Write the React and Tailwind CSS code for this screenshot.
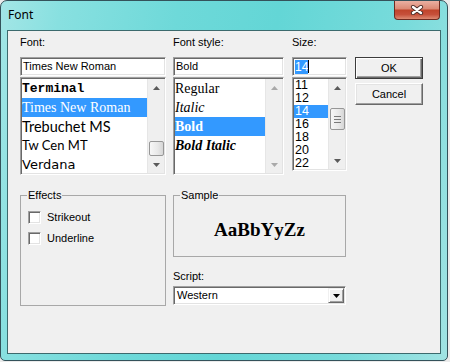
import React from 'react'

const sunken =
  'border border-t-[#a0a0a0] border-l-[#a0a0a0] border-r-white border-b-white shadow-[inset_1px_1px_0_#696969,inset_-1px_-1px_0_#e3e3e3]'

const Arrow = ({ up, color = '#5a5a5a' }) => (
  <svg width="7" height="4" viewBox="0 0 7 4">
    <path d={up ? 'M0 4 L3.5 0 L7 4Z' : 'M0 0 L3.5 4 L7 0Z'} fill={color} />
  </svg>
)

const ScrollBar = ({ children, disabled }) => {
  const c = disabled ? '#a9a9a9' : '#5a5a5a'
  return (
    <div className="w-[17px] h-full shrink-0 flex flex-col bg-[#efefef] border-l border-[#e6e6e6]">
      <div className="h-[17px] flex items-center justify-center">
        <Arrow up color={c} />
      </div>
      <div className="flex-1 flex flex-col items-center">{children}</div>
      <div className="h-[17px] flex items-center justify-center">
        <Arrow color={c} />
      </div>
    </div>
  )
}

const Label = ({ children }) => <div className="h-[13px] leading-[13px]">{children}</div>

const Checkbox = ({ label }) => (
  <div className="h-[13px] flex items-center">
    <div className={`w-[13px] h-[13px] bg-white ${sunken}`} />
    <span className="ml-[6px] leading-[13px]">{label}</span>
  </div>
)

const fonts = [
  { name: 'Terminal', cls: "font-['Liberation_Mono',monospace] font-bold text-[13px]" },
  { name: 'Times New Roman', cls: "font-['Liberation_Serif',serif] text-[14px]", selected: true },
  { name: 'Trebuchet MS', cls: "font-['Lato',sans-serif] text-[14.5px]" },
  { name: 'Tw Cen MT', cls: "font-['Lato',sans-serif] text-[13px]" },
  { name: 'Verdana', cls: "font-['DejaVu_Sans',sans-serif] text-[13px]" },
]

const styles = [
  { name: 'Regular', cls: '' },
  { name: 'Italic', cls: 'italic' },
  { name: 'Bold', cls: 'font-bold', selected: true },
  { name: 'Bold Italic', cls: 'font-bold italic' },
]

const sizes = ['11', '12', '14', '16', '18', '20', '22']

const App = () => {
  return (
    <div className="w-[450px] h-[362px] bg-[#ebebeb] overflow-hidden font-['Liberation_Sans',Arial,sans-serif] text-[11px] text-black">
      <div className="w-[448px] h-[361px] flex flex-col rounded-t-[7px] rounded-b-[5px] border border-[#34525a] bg-[linear-gradient(100deg,#a3e6e6_0%,#88e0e0_12%,#6ed9d9_35%,#63d6d6_55%,#78dbdb_80%,#a0e3e3_100%)]">
        {/* Title bar */}
        <div className="h-[29px] shrink-0 flex items-start justify-between">
          <span className="pl-[7px] pt-[6px] font-['Noto_Sans',sans-serif] text-[12px] leading-[16px]">Font</span>
          <div className="mr-[7px] w-[46px] h-[19px] rounded-b-[4px] border border-t-0 border-[#6d2b20] bg-[linear-gradient(180deg,#eab0a2_0%,#dc8b76_42%,#c0452c_52%,#c6503a_75%,#dd8a72_100%)] flex items-center justify-center">
            <svg width="14" height="10" viewBox="0 0 14 10">
              <path d="M3 2 L11 8 M11 2 L3 8" stroke="#4b2c27" strokeWidth="4.2" strokeLinecap="round" />
              <path d="M3 2 L11 8 M11 2 L3 8" stroke="#ffffff" strokeWidth="2.4" strokeLinecap="round" />
            </svg>
          </div>
        </div>

        {/* Client area */}
        <div className="mx-[6px] mb-[6px] flex-1 border border-[#3c6a6d] bg-[#f0f0f0] pl-[12px] pt-[5px]">
          <div className="flex items-start">
            {/* Font */}
            <div className="w-[146px]">
              <Label>Font:</Label>
              <div className={`mt-[8px] h-[19px] bg-white px-[2px] flex items-center ${sunken}`}>Times New Roman</div>
              <div className={`mt-[1px] h-[98px] bg-white p-[1px] flex overflow-hidden ${sunken}`}>
                <div className="flex-1 overflow-hidden">
                  {fonts.map((f) => (
                    <div
                      key={f.name}
                      className={`h-[19px] flex items-center whitespace-nowrap ${f.cls} ${f.selected ? 'bg-[#3399ff] text-white' : ''}`}
                    >
                      {f.name}
                    </div>
                  ))}
                </div>
                <ScrollBar>
                  <div className="mt-[45px] w-[15px] h-[15px] rounded-[2px] border border-[#979797] bg-[linear-gradient(90deg,#f7f7f7,#e8e8e8_60%,#d6d6d6)]" />
                </ScrollBar>
              </div>
            </div>

            {/* Font style */}
            <div className="ml-[7px] w-[111px]">
              <Label>Font style:</Label>
              <div className={`mt-[8px] h-[19px] bg-white px-[2px] flex items-center ${sunken}`}>Bold</div>
              <div className={`mt-[1px] h-[98px] bg-white p-[1px] flex overflow-hidden ${sunken}`}>
                <div className="flex-1 overflow-hidden font-['Liberation_Serif',serif] text-[14px]">
                  {styles.map((s) => (
                    <div
                      key={s.name}
                      className={`h-[19px] flex items-center whitespace-nowrap ${s.cls} ${s.selected ? 'bg-[#3399ff] text-white' : ''}`}
                    >
                      {s.name}
                    </div>
                  ))}
                </div>
                <ScrollBar disabled />
              </div>
            </div>

            {/* Size */}
            <div className="ml-[8px] w-[55px]">
              <Label>Size:</Label>
              <div className={`mt-[8px] h-[19px] bg-white px-[2px] flex items-center ${sunken}`}>
                <span className="bg-[#3399ff] text-white text-[12px] leading-[14px]">14</span>
                <span className="w-[1px] h-[13px] bg-black" />
              </div>
              <div className={`mt-[1px] h-[94px] bg-white p-[1px] flex overflow-hidden ${sunken}`}>
                <div className="flex-1 overflow-hidden text-[12.5px]">
                  {sizes.map((s) => (
                    <div
                      key={s}
                      className={`h-[13px] leading-[13px] pl-[1px] ${s === '14' ? 'bg-[#3399ff] text-white' : ''}`}
                    >
                      {s}
                    </div>
                  ))}
                </div>
                <ScrollBar>
                  <div className="mt-[12px] w-[15px] h-[22px] rounded-[2px] border border-[#979797] bg-[linear-gradient(90deg,#f7f7f7,#e8e8e8_60%,#d6d6d6)] flex flex-col items-center justify-center gap-[2px]">
                    <div className="w-[7px] h-[1px] bg-[#7a7a7a]" />
                    <div className="w-[7px] h-[1px] bg-[#7a7a7a]" />
                    <div className="w-[7px] h-[1px] bg-[#7a7a7a]" />
                  </div>
                </ScrollBar>
              </div>
            </div>

            {/* Buttons */}
            <div className="ml-[8px] w-[68px] pt-[21px] flex flex-col gap-[4px]">
              <div className="h-[22px] flex items-center justify-center bg-[#f0f0f0] border border-[#3c3c3c] shadow-[inset_1px_1px_0_#ffffff,inset_-1px_-1px_0_#696969,inset_-2px_-2px_0_#a0a0a0]">
                OK
              </div>
              <div className="h-[22px] flex items-center justify-center bg-[#f0f0f0] border border-t-white border-l-white border-r-[#696969] border-b-[#696969] shadow-[inset_-1px_-1px_0_#a0a0a0,inset_1px_1px_0_#e3e3e3]">
                Cancel
              </div>
            </div>
          </div>

          <div className="mt-[14px] flex items-start">
            {/* Effects */}
            <fieldset className="w-[146px] h-[117px] border border-[#a8a8a8]">
              <legend className="ml-[6px] px-[1px] leading-[13px]">Effects</legend>
              <div className="pl-[7px] pt-[9px] flex flex-col gap-[8px]">
                <Checkbox label="Strikeout" />
                <Checkbox label="Underline" />
              </div>
            </fieldset>

            <div className="ml-[7px] w-[173px]">
              {/* Sample */}
              <fieldset className="h-[68px] border border-[#a8a8a8]">
                <legend className="ml-[6px] px-[1px] leading-[13px]">Sample</legend>
                <div className="pt-[17px] text-center font-['Liberation_Serif',serif] font-bold text-[19px] leading-[22px]">
                  AaBbYyZz
                </div>
              </fieldset>

              <div className="mt-[13px]">
                <Label>Script:</Label>
              </div>
              <div className={`mt-[3px] h-[19px] bg-white p-[1px] flex items-stretch ${sunken}`}>
                <div className="flex-1 pl-[2px] flex items-center">Western</div>
                <div className="w-[16px] flex items-center justify-center bg-[#f0f0f0] border border-t-[#f0f0f0] border-l-[#f0f0f0] border-r-[#696969] border-b-[#696969] shadow-[inset_1px_1px_0_#ffffff,inset_-1px_-1px_0_#a0a0a0]">
                  <Arrow color="#000000" />
                </div>
              </div>
            </div>
          </div>
        </div>
      </div>
    </div>
  )
}

export default App
